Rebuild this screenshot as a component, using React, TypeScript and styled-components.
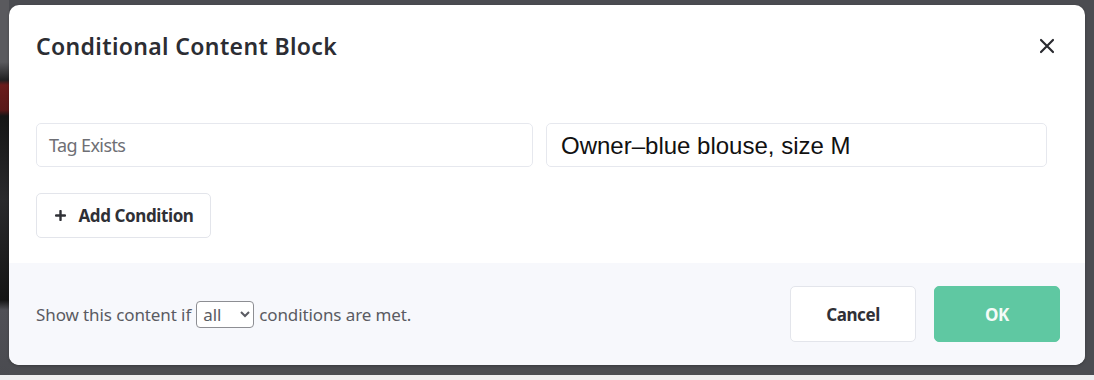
import React from "react";
import styled, { createGlobalStyle } from "styled-components";

const Global = createGlobalStyle`
  html, body { margin: 0; padding: 0; }
  body {
    width: 1094px;
    height: 380px;
    overflow: hidden;
    background: linear-gradient(to bottom, #4b4c51 0, #4b4c51 375px, #eeeef0 375px);
    font-family: "Noto Sans", "Open Sans", Arial, sans-serif;
  }
  * { box-sizing: border-box; }
`;

const Page = styled.div`
  display: flex;
  height: 375px;
  padding: 5px 9px 10px 0;
`;

const Backdrop = styled.div`
  width: 9px;
  flex: none;
  margin-top: -5px;
  margin-bottom: -10px;
  background: linear-gradient(
    to bottom,
    #5a5a5e 0,
    #5a5a5e 62px,
    #202022 80px,
    #6a1c1c 85px,
    #5a1818 110px,
    #161616 116px,
    #2a2a2c 200px,
    #151515 300px,
    #505056 310px,
    #4a4b50 100%
  );
`;

const Modal = styled.div`
  flex: 1;
  display: flex;
  flex-direction: column;
  background: #ffffff;
  border-radius: 10px;
  overflow: hidden;
  box-shadow: 0 1px 3px rgba(0, 0, 0, 0.25);
`;

const Header = styled.div`
  display: flex;
  align-items: center;
  justify-content: space-between;
  padding: 25px 29px 0 27px;
  height: 57px;
`;

const Title = styled.h2`
  margin: 0;
  font-size: 23px;
  line-height: 32px;
  font-weight: 600;
  color: #2c2d33;
  letter-spacing: 0.35px;
`;

const CloseButton = styled.button`
  border: none;
  background: none;
  padding: 0;
  width: 18px;
  height: 18px;
  display: flex;
  align-items: center;
  justify-content: center;
  color: #2a2b30;
  cursor: pointer;
`;

const Body = styled.div`
  display: flex;
  flex-direction: column;
  align-items: flex-start;
  gap: 26px;
  padding: 61px 38px 25px 27px;
`;

const ConditionRow = styled.div`
  display: flex;
  gap: 13px;
  width: 100%;
`;

const Field = styled.div<{ $variant?: "placeholder" | "value" }>`
  flex: 1;
  height: 44px;
  display: flex;
  align-items: center;
  border: 1px solid #e6e8ee;
  border-radius: 5px;
  padding: ${(p) => (p.$variant === "value" ? "2px 14px 0" : "0 12px")};
  font-family: ${(p) =>
    p.$variant === "value"
      ? `"Liberation Sans", Arial, sans-serif`
      : `"Noto Sans", "Open Sans", sans-serif`};
  font-size: ${(p) => (p.$variant === "value" ? "24px" : "18px")};
  color: ${(p) => (p.$variant === "value" ? "#111111" : "#6e6f75")};
  letter-spacing: ${(p) => (p.$variant === "value" ? "0" : "-0.6px")};
`;

const Button = styled.button<{ $primary?: boolean }>`
  display: inline-flex;
  align-items: center;
  justify-content: center;
  gap: 12px;
  font-family: "Noto Sans", "Open Sans", sans-serif;
  font-weight: 700;
  font-size: 17px;
  border-radius: 5px;
  cursor: pointer;
  border: 1px solid ${(p) => (p.$primary ? "#5fc8a2" : "#e3e5eb")};
  background: ${(p) => (p.$primary ? "#5fc8a2" : "#ffffff")};
  color: ${(p) => (p.$primary ? "#f4fbf8" : "#2f3036")};
  letter-spacing: -0.4px;
`;

const AddButton = styled(Button)`
  height: 45px;
  width: 175px;
  padding: 0 10px 0 12px;
`;

const FooterButton = styled(Button)`
  width: 126px;
  height: 56px;
`;

const Footer = styled.div`
  margin-top: auto;
  flex: 1;
  display: flex;
  align-items: center;
  justify-content: space-between;
  background: #f7f8fc;
  padding: 0 25px 0 27px;
`;

const Rule = styled.div`
  display: flex;
  align-items: center;
  gap: 5px;
  font-family: "Noto Sans", "Open Sans", sans-serif;
  font-size: 17px;
  color: #5a5b62;
  letter-spacing: -0.1px;
`;

const Select = styled.select`
  height: 27px;
  width: 58px;
  font-family: "Noto Sans", sans-serif;
  font-size: 17px;
  color: #5a5b62;
  border: 1.5px solid #8d8e93;
  border-radius: 4px;
  background: #ffffff;
  padding: 0 2px;
`;

const Actions = styled.div`
  display: flex;
  gap: 18px;
`;

const CloseIcon = () => (
  <svg width="16" height="16" viewBox="0 0 16 16" fill="none">
    <path d="M2 2 L14 14 M14 2 L2 14" stroke="currentColor" strokeWidth="2.2" strokeLinecap="round" />
  </svg>
);

const PlusIcon = () => (
  <svg width="11" height="11" viewBox="0 0 11 11" fill="none">
    <path d="M5.5 1 V10 M1 5.5 H10" stroke="currentColor" strokeWidth="2.4" strokeLinecap="round" />
  </svg>
);

export default function App() {
  return (
    <>
      <Global />
      <Page>
        <Backdrop />
        <Modal>
          <Header>
            <Title>Conditional Content Block</Title>
            <CloseButton aria-label="Close">
              <CloseIcon />
            </CloseButton>
          </Header>
          <Body>
            <ConditionRow>
              <Field $variant="placeholder">Tag Exists</Field>
              <Field $variant="value">Owner–blue blouse, size M</Field>
            </ConditionRow>
            <AddButton>
              <PlusIcon />
              Add Condition
            </AddButton>
          </Body>
          <Footer>
            <Rule>
              Show this content if
              <Select defaultValue="all">
                <option value="all">all</option>
                <option value="any">any</option>
              </Select>
              conditions are met.
            </Rule>
            <Actions>
              <FooterButton>Cancel</FooterButton>
              <FooterButton $primary>OK</FooterButton>
            </Actions>
          </Footer>
        </Modal>
      </Page>
    </>
  );
}
